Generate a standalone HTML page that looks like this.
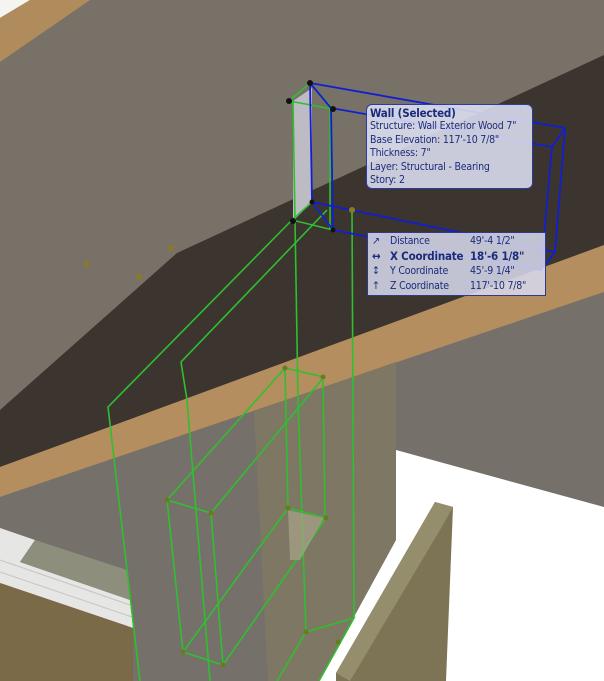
<!DOCTYPE html>
<html><head><meta charset="utf-8"><style>
html,body{margin:0;padding:0;width:604px;height:681px;overflow:hidden;background:#787167}
svg{position:absolute;left:0;top:0}
.tt{position:absolute;font-family:Tahoma,"DejaVu Sans Condensed","Liberation Sans",sans-serif;font-size:10.5px;color:#1c2c7c;letter-spacing:-0.2px}
.t1{left:366px;top:104px;width:167px;height:85px;background:rgba(222,224,242,0.88);border:1px solid #2c3ca0;border-radius:6px;box-sizing:border-box;padding:2px 0 0 3px;line-height:13.4px}
.t2{left:367px;top:232px;width:179px;height:64px;background:rgba(215,218,238,0.86);border:1px solid #303a8a;box-sizing:border-box;padding:1px 0 0 4px;line-height:15px}
.t2 div{white-space:nowrap}
.t2 span{display:inline-block}
.ic{width:18px}.lb{width:80px}
</style></head><body>
<svg width="604" height="681" viewBox="0 0 604 681">
<rect width="604" height="681" fill="#787167"/>
<polygon points="0,0 30,0 0,18" fill="#f4f4f0"/>
<polygon points="0,18 30,0 90,0 0,62" fill="#b08c5c"/>
<!-- dark roof beam -->
<polygon points="177,253 604,55 604,247 0,467 0,410" fill="#3c342e"/>
<!-- tan band -->
<polygon points="0,467 604,245 604,292 0,497" fill="#b48e5e"/>
<!-- wall below -->
<polygon points="0,497 604,292 604,507 396,450 396,540 319,681 140,681 0,583" fill="#76706a"/>
<!-- middle lighter column -->
<polygon points="254,411 396,362 396,540 319,681 268,681" fill="#7d7764"/>
<!-- white area right -->
<polygon points="396,450 604,507 604,681 319,681 396,540" fill="#ffffff"/>
<!-- right panel -->
<polygon points="435,502 453,507 446,681 336,681 336,673" fill="#7c7454"/>
<polygon points="435,502 453,507 440,530 350,681 336,673" fill="#948e6c"/>
<!-- floor lower-left -->
<polygon points="0,528 35,540 20,562 130,600 133,628 0,583" fill="#e6e6e4"/>
<polygon points="35,540 127,570 130,600 20,562" fill="#8e8e7c"/>
<polygon points="0,583 133,628 133,681 0,681" fill="#7b6a48"/>
<g stroke="#c4c4c4" stroke-width="1" fill="none">
<line x1="0" y1="560" x2="130" y2="605"/>
<line x1="0" y1="572" x2="132" y2="617"/>
</g>
<!-- light face -->
<polygon points="293,101 312,88 312,202 293,221" fill="#bdbcc4"/>
<!-- green wireframe -->
<g stroke="#2fbf2f" stroke-width="1.6" fill="none">
<polyline points="289,101 310,83 333,109 289,101"/>
<line x1="293" y1="101" x2="298" y2="400"/>
<line x1="298" y1="400" x2="306" y2="632"/>
<line x1="330" y1="109" x2="330" y2="230"/>
<line x1="352" y1="210" x2="354" y2="618"/>
<polyline points="292,220 108,407 140,681"/>
<polyline points="327,210 181,362 187,400 210,681"/>
<line x1="323" y1="380" x2="325" y2="517"/>
<line x1="285" y1="368" x2="288" y2="508"/>
<polyline points="292,220 312,202 333,230 292,220"/>
<polyline points="167,500 211,513 223,665 183,652 167,500"/>
<line x1="167" y1="500" x2="285" y2="368"/>
<line x1="211" y1="513" x2="324" y2="377"/>
<line x1="285" y1="368" x2="324" y2="377"/>
<line x1="183" y1="652" x2="288" y2="508"/>
<line x1="223" y1="665" x2="326" y2="518"/>
<line x1="288" y1="508" x2="326" y2="518"/>
<polyline points="277,681 306,632 354,618 319,681"/>
</g>
<polygon points="288,510 324,518 300,560 290,560" fill="#a8a488" opacity="0.7"/>
<!-- blue box -->
<g stroke="#1020d0" stroke-width="1.8" fill="none">
<polyline points="310,83 565,128 555,252 312,202 310,83"/>
<polyline points="331,108 552,147 541,270 333,230 331,108"/>
<line x1="310" y1="83" x2="331" y2="108"/>
<line x1="565" y1="128" x2="552" y2="147"/>
<line x1="555" y1="252" x2="541" y2="270"/>
<line x1="312" y1="202" x2="333" y2="230"/>
</g>
<g fill="#111">
<circle cx="310" cy="83" r="3"/><circle cx="289" cy="101" r="3"/><circle cx="333" cy="109" r="3"/>
<circle cx="293" cy="221" r="3"/><circle cx="312" cy="202" r="2.5"/><circle cx="333" cy="230" r="2.5"/>
</g>
<g fill="#8a7a28">
<circle cx="87" cy="264" r="3"/><circle cx="139" cy="277" r="3"/><circle cx="171" cy="248" r="3"/>
<circle cx="352" cy="210" r="3"/>
</g>
<g fill="#6a7a20">
<circle cx="167" cy="500" r="2.5"/><circle cx="211" cy="513" r="2.5"/><circle cx="183" cy="652" r="2.5"/><circle cx="223" cy="665" r="2.5"/>
<circle cx="285" cy="368" r="2.5"/><circle cx="323" cy="377" r="2.5"/><circle cx="288" cy="508" r="2.5"/><circle cx="326" cy="518" r="2.5"/>
<circle cx="306" cy="632" r="2.5"/><circle cx="338" cy="642" r="2.5"/>
</g>
</svg>
<div class="tt t1">
<div style="font-weight:bold;font-size:11.5px">Wall (Selected)</div>
<div>Structure: Wall Exterior Wood 7"</div>
<div>Base Elevation: 117'-10 7/8"</div>
<div>Thickness: 7"</div>
<div>Layer: Structural - Bearing</div>
<div>Story: 2</div>
</div>
<div class="tt t2">
<div><span class="ic">↗</span><span class="lb">Distance</span><span>49'-4 1/2"</span></div>
<div style="font-weight:bold;font-size:11.5px"><span class="ic">↔</span><span class="lb">X Coordinate</span><span>18'-6 1/8"</span></div>
<div><span class="ic">↕</span><span class="lb">Y Coordinate</span><span>45'-9 1/4"</span></div>
<div><span class="ic">↑</span><span class="lb">Z Coordinate</span><span>117'-10 7/8"</span></div>
</div>
</body></html>
